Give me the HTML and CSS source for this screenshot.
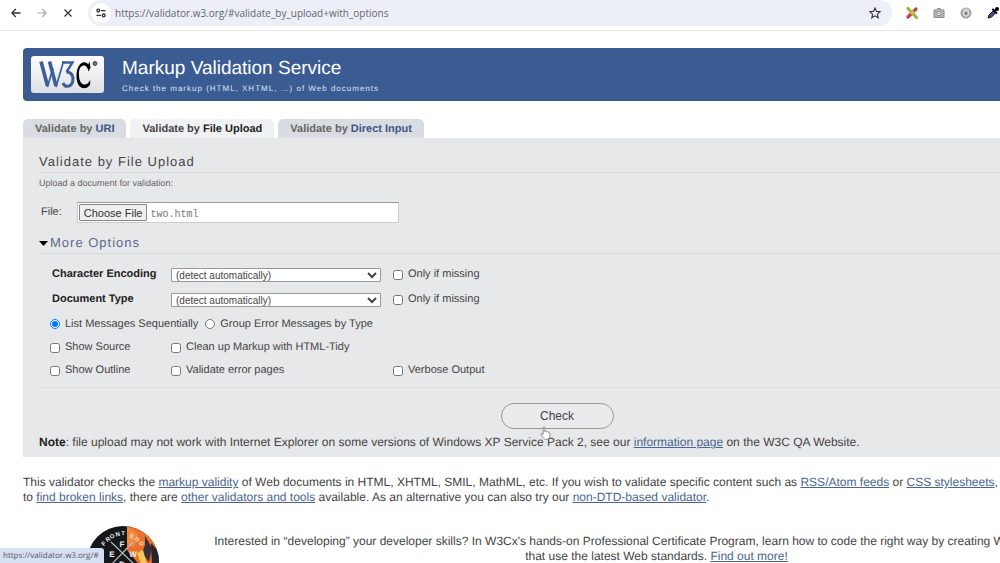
FILE: index.html
```html
<!DOCTYPE html>
<html lang="en">
<head>
    <meta charset="UTF-8">
    <meta name="viewport" content="width=device-width, initial-scale=1.0">
    <title>The W3C Markup Validation Service</title>
    <link rel="stylesheet" href="styles.css">
</head>
<body>
    <div class="toolbar">
        <button class="nav-btn" aria-label="Back">
            <svg width="10" height="10" viewBox="0 0 10 10"><path d="M9.5 5H1M4.8 1L.9 5l3.9 4" fill="none" stroke="#333" stroke-width="1.3"/></svg>
        </button>
        <button class="nav-btn" aria-label="Forward">
            <svg width="10" height="10" viewBox="0 0 10 10"><path d="M.5 5H9M5.2 1l3.9 4-3.9 4" fill="none" stroke="#aaa" stroke-width="1.2"/></svg>
        </button>
        <button class="nav-btn" aria-label="Stop">
            <svg width="10" height="10" viewBox="0 0 10 10"><path d="M1.5 1.5l7 7M8.5 1.5l-7 7" fill="none" stroke="#333" stroke-width="1.3"/></svg>
        </button>
        <div class="address">
            <button class="site-info" aria-label="Site information">
                <svg width="10" height="10" viewBox="0 0 10 10" fill="none" stroke="#333" stroke-width="1.3"><circle cx="2.3" cy="2.6" r="1.4"/><path d="M5 2.6h4.5M.5 7.4H5"/><circle cx="7.7" cy="7.4" r="1.4"/></svg>
            </button>
            <input type="text" class="url" aria-label="Address" value="https://validator.w3.org/#validate_by_upload+with_options">
            <button class="nav-btn" aria-label="Bookmark">
                <svg width="12" height="12" viewBox="0 0 12 12"><path d="M6 1l1.5 3.4 3.7.4-2.8 2.4.8 3.6L6 8.9l-3.2 1.9.8-3.6L.8 4.8l3.7-.4z" fill="none" stroke="#333" stroke-width="1.1"/></svg>
            </button>
        </div>
        <div class="extensions">
            <svg width="14" height="14" viewBox="0 0 14 14"><path d="M3 11L11 3" stroke="#c4453c" stroke-width="3.2" stroke-linecap="round"/><path d="M3 2.5l8.5 9" stroke="#9db53c" stroke-width="3.2" stroke-linecap="round"/><path d="M6 8l3-3" stroke="#b9c95a" stroke-width="2.4"/></svg>
            <svg width="14" height="14" viewBox="0 0 14 14"><path d="M2 4h2.5l1-1.5h3L9.5 4H12v7.5H2z" fill="#b5b5b5" stroke="#8c8c8c"/><circle cx="7" cy="7.5" r="2.2" fill="#fff" stroke="#888"/><circle cx="7" cy="7.5" r=".8" fill="#777"/></svg>
            <svg width="14" height="14" viewBox="0 0 14 14"><circle cx="7" cy="7" r="5.5" fill="#a0a0a0"/><path d="M2.5 4.5a5.5 5.5 0 0 1 9 0z" fill="#c4c4c4"/><circle cx="7" cy="7.3" r="3" fill="#bbb" stroke="#ececec"/><circle cx="7" cy="7.3" r="1.2" fill="#777"/></svg>
            <svg width="14" height="14" viewBox="0 0 14 14"><path d="M2 12l1-3 5-5 2.300 2.300-5 5z" fill="#4a4a9c" stroke="#15152e"/><path d="M7 3.5L10.5 7M9 5l2-2" stroke="#000" stroke-width="2" stroke-linecap="round"/><circle cx="11" cy="3" r="2" fill="#000"/></svg>
        </div>
    </div>

    <div class="page">
        <div class="banner">
            <a class="logo" href="#" aria-label="W3C">
                <svg width="73" height="37" viewBox="0 0 73 37">
                    <defs>
                        <linearGradient id="plate" x1="0" y1="0" x2="0" y2="1"><stop offset="0" stop-color="#fff"/><stop offset="1" stop-color="#dcdfe3"/></linearGradient>
                    </defs>
                    <rect width="73" height="37" rx="3" fill="url(#plate)"/>
                    <g fill="none" stroke="#3a5f98">
                        <path d="M10 5.5L16.5 30M18.5 5.5L25 30" stroke-width="3.6"/>
                        <path d="M16.5 31L22 12M25 31L32.5 5.5" stroke-width="1.7"/>
                        <path d="M31 6.5h10.5L35.5 16" stroke-width="2.4"/>
                        <path d="M35.5 16c5.500.3 7 4.500 6.300 8.500-.8 6-7 8.200-10 2.500" stroke-width="3"/>
                    </g>
                    <path d="M58.500 5.500l1 6-2 4c-1-4.500-2.700-6-4.500-6-3.500 0-5.500 4-5 10.500.4 5.500 2.600 8.500 5.600 8.500 2.300 0 4-1.500 5.600-4.500v4.500c-1.500 2.400-3.500 3.700-6 3.700-5 0-7.700-5-7.700-12 0-8.200 3.200-14 8-14 2 0 3 1 3.700 2.300z" fill="#000"/>
                    <circle cx="64" cy="7.5" r="2" fill="#777" stroke="#444"/>
                </svg>
            </a>
            <div>
                <h1>Markup Validation Service</h1>
                <p class="tagline">Check the markup (HTML, XHTML, …) of Web documents</p>
            </div>
        </div>

        <div class="tabs">
            <a href="#validate_by_uri">Validate by <span>URI</span></a>
            <a href="#validate_by_upload" class="selected">Validate by <span>File Upload</span></a>
            <a href="#validate_by_input">Validate by <span>Direct Input</span></a>
        </div>

        <form class="panel">
            <h2>Validate by File Upload</h2>
            <p class="hint">Upload a document for validation:</p>
            <div class="file-row">
                <label for="uploaded_file">File:</label>
                <input type="file" id="uploaded_file">
            </div>
            <h2 class="more"><a href="#"><svg width="9" height="5" viewBox="0 0 9 5"><path d="M0 0h9L4.5 5z" fill="#000"/></svg>More Options</a></h2>

            <div class="options">
                <label class="name" for="charset">Character Encoding</label>
                <select id="charset"><option>(detect automatically)</option></select>
                <label><input type="checkbox"> Only if missing</label>

                <label class="name" for="doctype">Document Type</label>
                <select id="doctype"><option>(detect automatically)</option></select>
                <label><input type="checkbox"> Only if missing</label>

                <div class="wide">
                    <label><input type="radio" name="group" checked> List Messages Sequentially</label>
                    <label><input type="radio" name="group"> Group Error Messages by Type</label>
                </div>

                <label><input type="checkbox"> Show Source</label>
                <label class="tidy"><input type="checkbox"> Clean up Markup with HTML-Tidy</label>

                <label><input type="checkbox"> Show Outline</label>
                <label><input type="checkbox"> Validate error pages</label>
                <label><input type="checkbox"> Verbose Output</label>
            </div>

            <div class="submit">
                <button type="button" class="check">Check</button>
                <svg class="pointer" width="12" height="14" viewBox="0 0 12 14"><path d="M3.200 8.500V1.700c0-1.200 1.600-1.200 1.600 0v4c.5-.6 1.500-.5 1.700.2.600-.5 1.500-.3 1.700.4.700-.4 1.700 0 1.700.9v2.600c0 2-1 3.500-3 3.500H5.500c-1.200 0-1.800-.8-2.300-1.600L1 8.500c-.4-.9.700-1.400 1.300-.8z" fill="#fff" stroke="#777" stroke-width=".8"/></svg>
            </div>
            <p class="note"><strong>Note</strong>: file upload may not work with Internet Explorer on some versions of Windows XP Service Pack 2, see our <a href="#">information page</a> on the W3C QA Website.</p>
        </form>

        <p class="about">This validator checks the <a href="#">markup validity</a> of Web documents in HTML, XHTML, SMIL, MathML, etc. If you wish to validate specific content such as <a href="#">RSS/Atom feeds</a> or <a href="#">CSS stylesheets</a>, <a href="#">MobileOK content</a>, or to <a href="#">find broken links</a>, there are <a href="#">other validators and tools</a> available. As an alternative you can also try our <a href="#">non-DTD-based validator</a>.</p>

        <div class="promo">
            <svg width="72" height="72" viewBox="0 0 72 72">
                <defs>
                    <clipPath id="disc"><circle cx="36" cy="36" r="36"/></clipPath>
                </defs>
                <g clip-path="url(#disc)">
                    <rect width="72" height="72" fill="#16171a"/>
                    <path d="M40 0h32v46H58L40 24z" fill="#e9722a"/>
                    <path d="M40 0l11 8-4 14-7-4z" fill="#f08a3c"/>
                    <path d="M58 10l7 12-3 14-7-9 3-8z" fill="#3b2d3a"/>
                    <path d="M50 27l6-3 4 14-5 2z" fill="#f3c75a"/>
                    <path d="M64 17l8 9v20l-7-6z" fill="#23252c"/>
                    <path d="M24 16l24 23M46 16L24 39" stroke="#b9bbbd" stroke-width="1.2"/>
                    <g fill="#eee" font-family="Liberation Sans, sans-serif" font-weight="bold" text-anchor="middle">
                        <g font-size="6">
                            <text transform="translate(18 19) rotate(-44)">F</text>
                            <text transform="translate(22 15) rotate(-34)">R</text>
                            <text transform="translate(26 12) rotate(-24)">O</text>
                            <text transform="translate(31 10) rotate(-12)">N</text>
                            <text transform="translate(36 9) rotate(0)">T</text>
                        </g>
                        <g font-size="6" fill="#ffd9c2">
                            <text transform="translate(44 12) rotate(22)">E</text>
                            <text transform="translate(49 15) rotate(34)">N</text>
                            <text transform="translate(53 19) rotate(46)">D</text>
                        </g>
                        <g font-size="8">
                            <text x="35" y="21">F</text>
                            <text x="25" y="31">E</text>
                            <text x="46" y="31">W</text>
                            <text x="35" y="41">D</text>
                        </g>
                    </g>
                </g>
            </svg>
            <p>Interested in “developing” your developer skills? In W3Cx's hands-on Professional Certificate Program, learn how to code the right way by creating Web sites and apps that use the latest Web standards. <a href="#">Find out more!</a></p>
        </div>
    </div>

    <div class="status">https://validator.w3.org/#</div>

    <script>
        // preselect the uploaded document
        const files = new DataTransfer();
        files.items.add(new File([''], 'two.html', { type: 'text/html' }));
        document.getElementById('uploaded_file').files = files.files;
    </script>
</body>
</html>
```
FILE: styles.css
```css
* {
    box-sizing: border-box;
}
body {
    margin: 0;
    height: 100vh;
    overflow: hidden;
    font-family: "Liberation Sans", Arial, sans-serif;
    font-size: 12px;
    line-height: 15px;
    text-rendering: geometricPrecision;
    color: #444;
    background-color: #fff;
}
h1, h2, p {
    margin: 0;
    font-weight: normal;
}
a {
    color: #4a6590;
}
svg {
    display: block;
    flex-shrink: 0;
}

/* browser bar */
.toolbar {
    display: flex;
    align-items: center;
    height: 31px;
    padding: 0 0 4px 3px;
    border-bottom: 1px solid #e6e6e6;
}
.nav-btn, .site-info {
    display: flex;
    align-items: center;
    justify-content: center;
    width: 26px;
    height: 24px;
    padding: 0;
    border: none;
    background: none;
}
.address {
    display: flex;
    flex: 1;
    align-items: center;
    height: 26px;
    margin-left: 7px;
    padding: 0 4px 0 3px;
    border-radius: 13px;
    background-color: #eceef8;
}
.site-info {
    width: 20px;
    height: 20px;
    border-radius: 50%;
    background-color: #fff;
}
.url {
    flex: 1;
    padding: 0;
    margin-left: 4px;
    border: none;
    background: none;
    color: #666;
    font-family: "Open Sans", sans-serif;
    font-size: 10px;
}
.extensions {
    display: flex;
    gap: 13px;
    margin-left: 13px;
    width: 95px;
}

/* the page runs past the right edge of the window */
.page {
    margin: 17px -91px 0 23px;
}
.banner {
    display: flex;
    gap: 18px;
    height: 53px;
    padding: 8px;
    border-radius: 4px;
    background-color: #3a5c92;
    color: #fff;
}
h1 {
    font-size: 19px;
    line-height: 25px;
}
.tagline {
    font-size: 8px;
    letter-spacing: 1px;
    color: #dde6f5;
}
.tabs {
    display: flex;
    gap: 4px;
    margin-top: 18px;
}
.tabs a {
    padding: 3px 12px 1px;
    border-radius: 5px 5px 0 0;
    background-color: #d9dce0;
    color: #666;
    font-size: 11px;
    font-weight: bold;
    text-decoration: none;
}
.tabs span {
    color: #3f5685;
}
.tabs .selected {
    background-color: #f0f1f3;
    color: #444;
}
.tabs .selected span {
    color: #222;
}

.panel {
    padding: 15px 16px 7px;
    background-color: #e7e8ea;
}
h2 {
    padding-bottom: 1px;
    border-bottom: 1px solid #d7dadd;
    font-size: 13px;
    line-height: 18px;
    letter-spacing: 1px;
}
.hint {
    margin-top: 3px;
    font-size: 9px;
    color: #666;
}
.file-row {
    display: flex;
    align-items: center;
    gap: 15px;
    margin: 11px 0;
    padding-left: 2px;
    font-size: 11px;
}
input[type="file"] {
    width: 322px;
    height: 21px;
    padding: 1px;
    border: 1px solid #ccc;
    border-top-color: #999;
    background-color: #fff;
    color: #777;
    font-family: "Liberation Mono", monospace;
    font-size: 10px;
    line-height: 17px;
}
input::file-selector-button {
    height: 17px;
    margin: 0 3px 0 0;
    padding: 0 4px;
    border: 1px solid #888;
    border-radius: 1px;
    background-color: #efefef;
    color: #333;
    font-family: "Liberation Sans", Arial, sans-serif;
    font-size: 11px;
}
.more a {
    display: flex;
    align-items: center;
    gap: 2px;
    color: #5a6a8c;
    text-decoration: none;
}

.options {
    display: grid;
    grid-template-columns: 121px 222px 1fr;
    grid-template-rows: 25px 25px 24px 23px 23px;
    align-items: center;
    padding: 8px 0 5px 11px;
    border-bottom: 1px solid #dcdee1;
    font-size: 11px;
}
.options label {
    display: flex;
    align-items: center;
    gap: 5px;
}
.options .name {
    padding-left: 2px;
    color: #222;
    font-weight: bold;
}
.options input {
    width: 10px;
    height: 10px;
    margin: 0;
}
.options select {
    width: 210px;
    height: 14px;
    padding: 0;
    border: 1px solid #999;
    border-radius: 1px;
    background-color: #fff;
    color: #444;
    font-family: inherit;
    font-size: 10px;
}
.wide {
    display: flex;
    grid-column: 1 / -1;
    gap: 7px;
}
.tidy {
    grid-column: 2 / -1;
}
.submit {
    position: relative;
    width: 113px;
    margin: 15px auto 6px;
}
.check {
    display: block;
    width: 100%;
    height: 26px;
    border: 1px solid #999;
    border-radius: 13px;
    background-color: #eaebed;
    color: #444;
    font-family: inherit;
    font-size: 12px;
}
.pointer {
    position: absolute;
    left: 39px;
    top: 23px;
}
.note strong {
    color: #222;
}
.about {
    margin: 18px -30px 0 0;
}
.promo {
    display: flex;
    gap: 50px;
    margin: 21px -13px 0 64px;
}
.promo p {
    flex: 1;
    padding-top: 8px;
    text-align: center;
}

.status {
    position: absolute;
    left: 0;
    bottom: 0;
    padding: 0 5px 0 3px;
    border-radius: 0 3px 0 0;
    background-color: #d5e0f5;
    color: #555;
    font-family: "Open Sans", sans-serif;
    font-size: 8px;
}
```
